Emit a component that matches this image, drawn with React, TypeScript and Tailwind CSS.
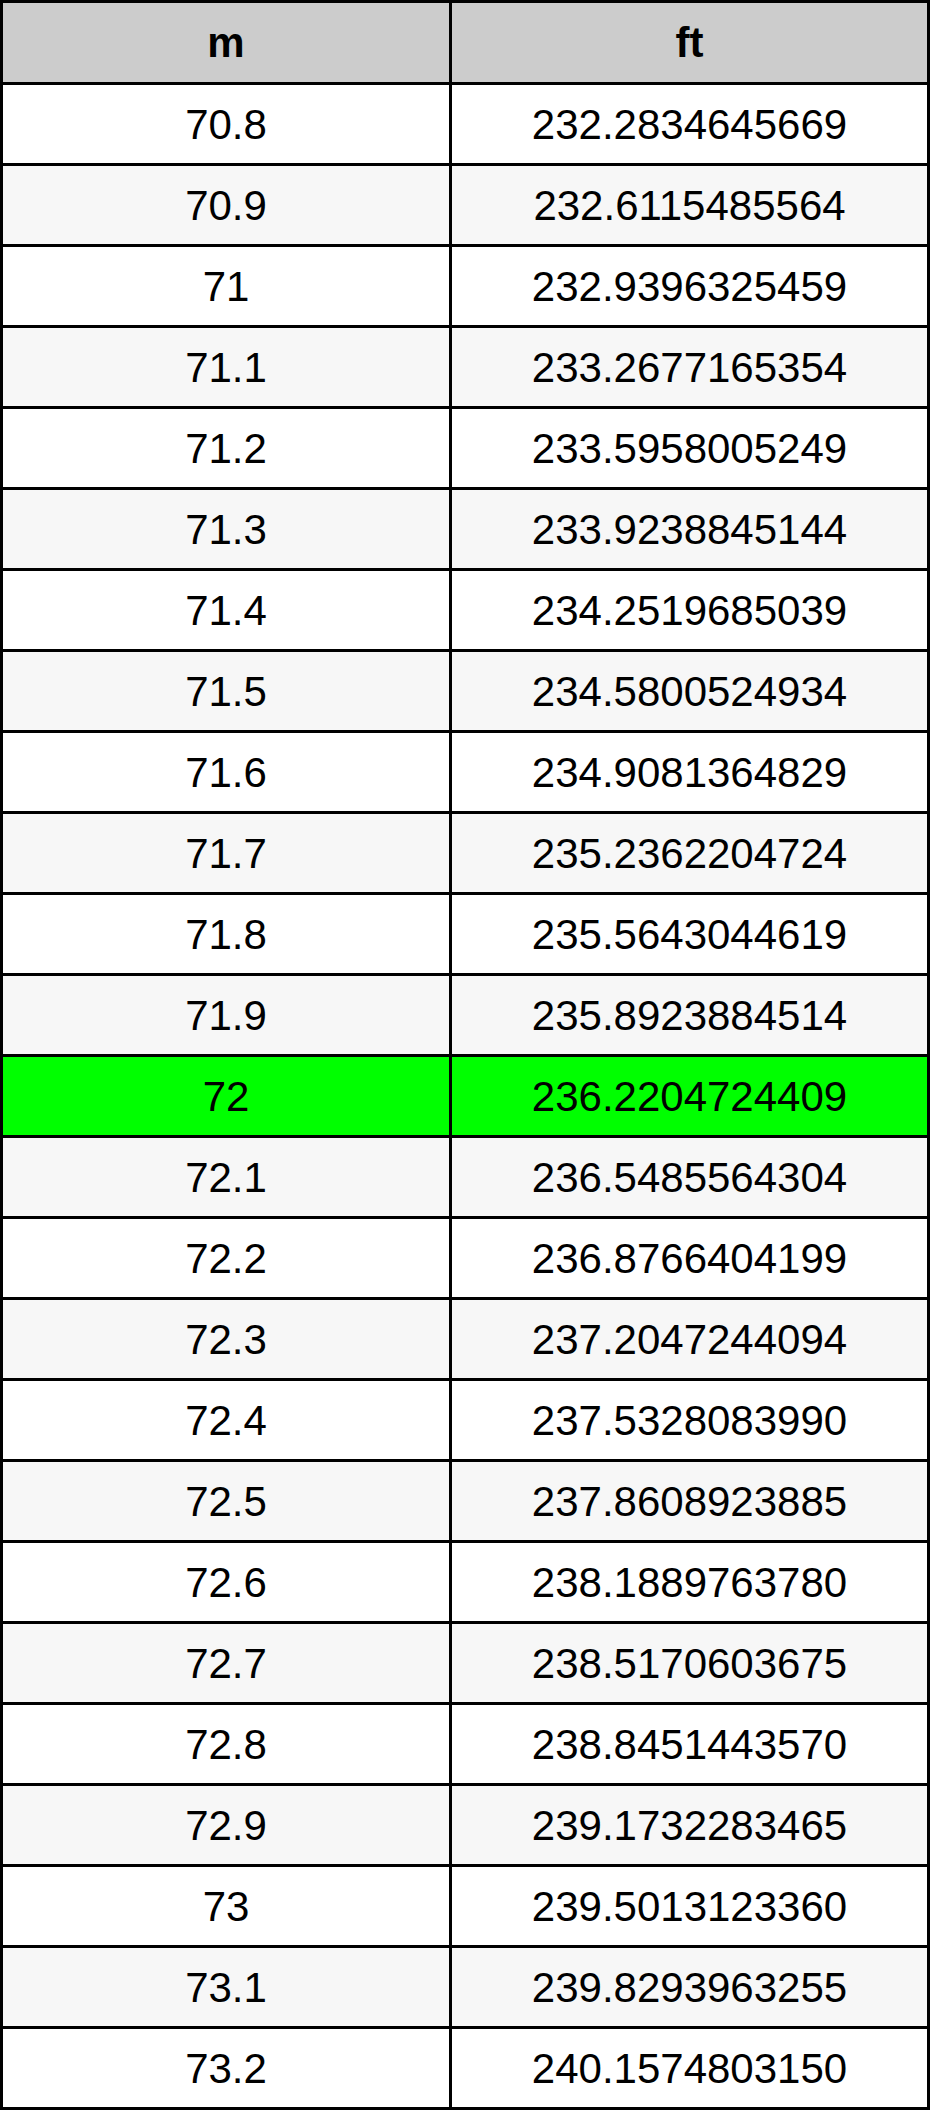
// metres → feet conversion table, 70.8 m to 73.2 m, 72 highlighted

const rows: [string, string][] = [
  ['70.8', '232.2834645669'],
  ['70.9', '232.6115485564'],
  ['71', '232.9396325459'],
  ['71.1', '233.2677165354'],
  ['71.2', '233.5958005249'],
  ['71.3', '233.9238845144'],
  ['71.4', '234.2519685039'],
  ['71.5', '234.5800524934'],
  ['71.6', '234.9081364829'],
  ['71.7', '235.2362204724'],
  ['71.8', '235.5643044619'],
  ['71.9', '235.8923884514'],
  ['72', '236.2204724409'],
  ['72.1', '236.5485564304'],
  ['72.2', '236.8766404199'],
  ['72.3', '237.2047244094'],
  ['72.4', '237.5328083990'],
  ['72.5', '237.8608923885'],
  ['72.6', '238.1889763780'],
  ['72.7', '238.5170603675'],
  ['72.8', '238.8451443570'],
  ['72.9', '239.1732283465'],
  ['73', '239.5013123360'],
  ['73.1', '239.8293963255'],
  ['73.2', '240.1574803150'],
];

export default function App() {
  return (
    <div className="w-[930px] bg-white font-['Liberation_Sans',Arial,sans-serif] text-black">
      <table className="w-[930px] border-collapse border-[3px] border-black table-fixed">
        <colgroup>
          <col className="w-[449px]" />
          <col />
        </colgroup>
        <thead>
          <tr className="bg-[#cccccc] h-[82px]">
            <th className="border-[3px] border-black text-[42px] font-bold text-center p-0">m</th>
            <th className="border-[3px] border-black text-[42px] font-bold text-center p-0">ft</th>
          </tr>
        </thead>
        <tbody>
          {rows.map(([m, ft], i) => {
            const bg = m === '72' ? 'bg-[#00ff00]' : i % 2 === 1 ? 'bg-[#f7f7f7]' : 'bg-white';
            return (
              <tr key={m} className={`${bg} h-[81px]`}>
                <td className="border-[3px] border-black text-[42px] text-center p-0">{m}</td>
                <td className="border-[3px] border-black text-[42px] text-center p-0">{ft}</td>
              </tr>
            );
          })}
        </tbody>
      </table>
    </div>
  );
}
